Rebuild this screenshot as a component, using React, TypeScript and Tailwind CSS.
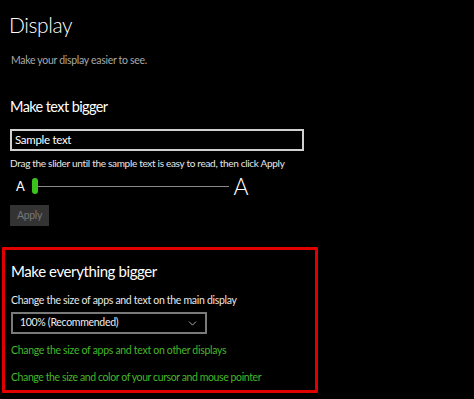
import { ChevronDown } from 'lucide-react'

const font = { fontFamily: 'Lato, "Open Sans", sans-serif' }

export default function App() {
  return (
    <div className="w-[474px] h-[399px] bg-black text-white overflow-hidden tracking-[-0.3px]" style={font}>
      <div className="pl-[9px] pt-[10px]">
        <h1 className="text-[21px] leading-[30px] font-light tracking-[-0.4px]">Display</h1>
        <p className="mt-[13px] ml-[2px] text-[10.5px] leading-[14px] text-[#a8a8a8]">Make your display easier to see.</p>
      </div>

      <div className="px-[10px] mt-[30px]">
        <h2 className="text-[14.5px] leading-[20px] tracking-[-0.6px]">Make text bigger</h2>
        <div className="mt-[12px] w-[294px] h-[22px] border-2 border-[#d0d0d0] flex items-center px-[3px]">
          <span className="text-[11.5px] leading-none">Sample text</span>
        </div>
        <p className="mt-[5px] text-[10px] leading-[14px] text-[#e8e8e8] whitespace-nowrap">
          Drag the slider until the sample text is easy to read, then click Apply
        </p>
        <div className="mt-[5px] flex items-center h-[22px]">
          <span className="ml-[6px] text-[13px] leading-none">A</span>
          <div className="ml-[7px] w-[6px] h-[16px] rounded-full bg-[#3cc21c]" />
          <div className="w-[191px] h-px bg-[#8a8a8a]" />
          <span className="ml-[5px] text-[23px] leading-none font-light">A</span>
        </div>
        <div className="mt-[8px] w-[39px] h-[21px] bg-[#333] flex items-center justify-center text-[10.5px] text-[#777]">
          Apply
        </div>
      </div>

      <div className="ml-[2px] mt-[21px] w-[316px] h-[146px] border-[3px] border-[#e00000] pl-[6px] pt-[11px]">
        <h2 className="text-[15px] leading-[20px] tracking-[-0.4px]">Make everything bigger</h2>
        <p className="mt-[12px] text-[10.5px] leading-[14px] text-[#e8e8e8]">Change the size of apps and text on the main display</p>
        <div className="mt-[5px] w-[196px] h-[22px] border-2 border-[#7a7a7a] flex items-center justify-between pl-[7px] pr-[6px]">
          <span className="text-[10.5px] text-[#eee]">100% (Recommended)</span>
          <ChevronDown size={13} strokeWidth={1.5} className="text-[#ccc]" />
        </div>
        <p className="mt-[9px] text-[10.5px] leading-[14px] text-[#45b82a]">Change the size of apps and text on other displays</p>
        <p className="mt-[13px] text-[10.5px] leading-[14px] text-[#45b82a] tracking-[-0.4px]">Change the size and color of your cursor and mouse pointer</p>
      </div>
    </div>
  )
}
